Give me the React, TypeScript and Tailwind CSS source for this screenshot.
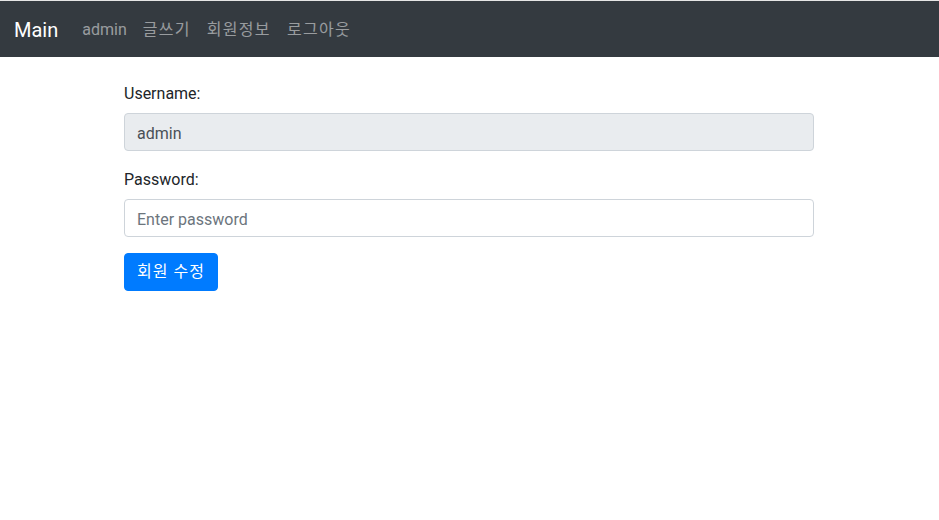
import React from "react";

export default function App() {
  const font = { fontFamily: 'Roboto, "Noto Sans CJK KR", sans-serif' };
  return (
    <div className="min-h-[520px] bg-white text-[16px] leading-[24px] text-[#212529]" style={font}>
      <div className="h-px bg-[#e5e5e5]" />
      <nav className="flex h-[56px] items-center bg-[#343a40] px-[14px] pt-[2px]">
        <a className="mr-4 text-[20px] leading-[30px] text-white">Main</a>
        <ul className="flex items-center">
          <li className="px-2 text-[rgba(255,255,255,0.5)]">admin</li>
          <li className="px-2 tracking-[1.3px] text-[rgba(255,255,255,0.5)]">글쓰기</li>
          <li className="px-2 tracking-[1.3px] text-[rgba(255,255,255,0.5)]">회원정보</li>
          <li className="px-2 tracking-[1.3px] text-[rgba(255,255,255,0.5)]">로그아웃</li>
        </ul>
      </nav>
      <div className="ml-[109px] w-[720px] px-[15px] pt-[24px]">
        <div className="mb-4">
          <label className="mb-[7px] block pt-px">Username:</label>
          <input
            readOnly
            value="admin"
            className="block h-[38px] w-full rounded-[4px] border border-[#ced4da] bg-[#e9ecef] px-3 pt-[2px] text-[16px] text-[#495057] outline-none"
            style={font}
          />
        </div>
        <div className="mb-4">
          <label className="mb-[7px] block pt-px">Password:</label>
          <input
            type="password"
            placeholder="Enter password"
            className="block h-[38px] w-full rounded-[4px] border border-[#ced4da] bg-white px-3 pt-[2px] text-[16px] text-[#495057] outline-none placeholder:text-[#6c757d]"
            style={font}
          />
        </div>
        <button
          className="h-[38px] rounded-[4px] border border-[#007bff] bg-[#007bff] px-3 text-[16px] tracking-[1px] text-white"
          style={font}
        >
          회원 수정
        </button>
      </div>
    </div>
  );
}
